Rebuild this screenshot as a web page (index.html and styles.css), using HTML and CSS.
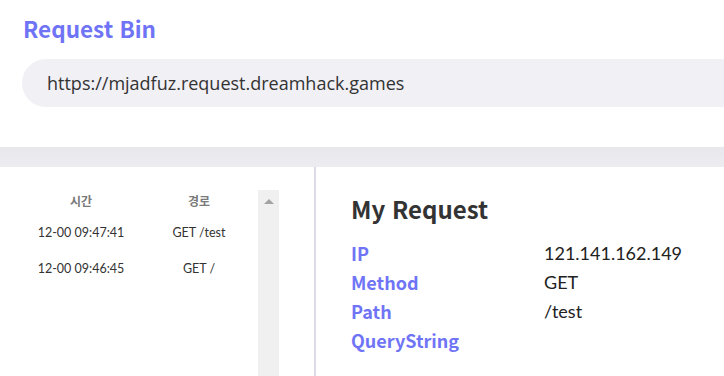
FILE: index.html
```html
<!DOCTYPE html>
<html lang="ko">
<head>
  <meta charset="UTF-8" />
  <meta name="viewport" content="width=device-width, initial-scale=1.0" />
  <title>Request Bin</title>
  <link rel="stylesheet" href="styles.css">
</head>
<body>

<!-- 상단 -->
<header class="top">
  <h1 class="brand">Request Bin</h1>
  <div class="url-box">https://mjadfuz.request.dreamhack.games</div>
</header>

<div class="band"></div>

<div class="main">
  <!-- 요청 목록 -->
  <div class="list-panel">
    <div class="list-wrap">
      <table class="req-table">
        <thead>
          <tr><th>시간</th><th>경로</th></tr>
        </thead>
        <tbody>
          <tr><td>12-00 09:47:41</td><td>GET /test</td></tr>
          <tr><td>12-00 09:46:45</td><td>GET /</td></tr>
        </tbody>
      </table>
      <div class="scrollbar"><span class="arrow-up"></span></div>
    </div>
  </div>

  <!-- 상세 -->
  <div class="detail">
    <h2>My Request</h2>
    <dl class="info">
      <dt>IP</dt><dd>121.141.162.149</dd>
      <dt>Method</dt><dd>GET</dd>
      <dt>Path</dt><dd>/test</dd>
      <dt>QueryString</dt><dd></dd>
    </dl>
  </div>
</div>

</body>
</html>
```

FILE: styles.css
```css
html, body {
  margin: 0;
  padding: 0;
  overflow: hidden;
  background: #fff;
  font-family: "Noto Sans CJK KR", "Noto Sans", sans-serif;
  color: #333;
  box-sizing: border-box;
}
*, *::before, *::after {
  box-sizing: inherit;
}
.top {
  padding: 14px 0 40px 22px;
}
.brand {
  margin: 0 0 0 1px;
  font-size: 22.5px;
  font-weight: 700;
  line-height: 29px;
  color: #6f74f6;
}
.url-box {
  margin: 16px 0 0 0;
  height: 48px;
  padding: 0 25px;
  border-radius: 24px 0 0 24px;
  background: #f0f0f5;
  font-family: "Open Sans", sans-serif;
  font-size: 18px;
  line-height: 48px;
  color: #333;
}
.band {
  height: 20px;
  background: linear-gradient(#e7e7ec, #ececf1);
}
.main {
  display: flex;
  height: 209px;
}
.list-panel {
  width: 316px;
  border-right: 2px solid #dddbe7;
  padding: 23px 0 0 22px;
}
.list-wrap {
  display: flex;
  height: 100%;
}
.req-table {
  width: 236px;
  border-collapse: collapse;
  table-layout: fixed;
  align-self: flex-start;
  font-family: "Lato", "Noto Sans CJK KR", sans-serif;
  font-size: 12.5px;
}
.req-table th {
  font-family: "Noto Sans CJK KR", sans-serif;
  font-size: 12px;
  font-weight: 700;
  color: #7a7a7a;
  height: 20px;
  padding: 0;
}
.req-table td {
  text-align: center;
  height: 36px;
  padding: 0;
  color: #333;
}
.req-table tbody tr:first-child td {
  height: 40px;
  padding-top: 4px;
}
.scrollbar {
  width: 21px;
  background: #f0f0f0;
  display: flex;
  justify-content: center;
  padding-top: 9px;
}
.arrow-up {
  width: 0;
  height: 0;
  border-left: 5px solid transparent;
  border-right: 5px solid transparent;
  border-bottom: 5px solid #a3a3a3;
}
.detail {
  padding: 25px 0 0 35px;
  flex: 1;
}
.detail h2 {
  margin: 0 0 12px 0;
  font-size: 24px;
  font-weight: 700;
  line-height: 34px;
  color: #333;
}
.info {
  margin: 0;
  display: grid;
  grid-template-columns: 193px 1fr;
  grid-auto-rows: 29px;
  align-items: center;
}
.info dt {
  font-size: 18px;
  font-weight: 700;
  color: #6f74f6;
}
.info dd {
  margin: 0;
  font-family: "Lato", sans-serif;
  font-size: 18px;
  color: #222;
}
```
